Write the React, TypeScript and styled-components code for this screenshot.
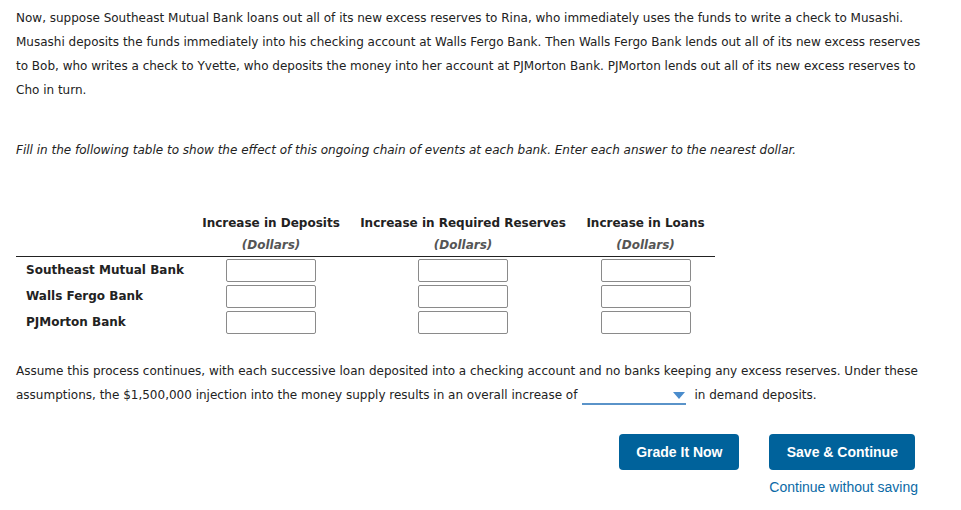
import React from "react";
import styled, { createGlobalStyle } from "styled-components";

const Global = createGlobalStyle`
  html, body { margin: 0; padding: 0; background: #fff; }
  body { font-family: "DejaVu Sans", Verdana, sans-serif; color: #222; }
`;

const FONT = `"DejaVu Sans", Verdana, sans-serif`;

const Page = styled.div`
  padding: 6px 16px 0 16px;
  width: 961px;
  box-sizing: border-box;
  font-family: ${FONT};
`;

const Para = styled.p<{ $mt?: number }>`
  margin: ${(p) => p.$mt ?? 0}px 0 0 0;
  font-family: ${FONT};
  font-size: 12px;
  line-height: 24px;
  width: 912px;
  color: #222;
`;

const Instr = styled(Para)`
  font-style: italic;
`;

const Table = styled.table`
  margin-top: 50px;
  border-collapse: collapse;
  table-layout: fixed;
  width: 699px;
  font-family: ${FONT};
  font-size: 12px;
  color: #222;
`;

const Th = styled.th<{ $w: number }>`
  width: ${(p) => p.$w}px;
  padding: 0;
  height: 22px;
  font-weight: bold;
  text-align: center;
  white-space: nowrap;
`;

const SubTh = styled.th`
  padding: 0;
  height: 22px;
  font-weight: bold;
  font-style: italic;
  color: #555;
  text-align: center;
  border-bottom: 1px solid #222;
`;

const RowLabel = styled.td`
  padding: 0 0 0 10px;
  height: 26px;
  font-weight: bold;
  white-space: nowrap;
`;

const Cell = styled.td`
  padding: 0;
  text-align: center;
  height: 26px;
`;

const Box = styled.input`
  box-sizing: border-box;
  width: 90px;
  height: 23px;
  border: 1px solid #8a8a8a;
  border-radius: 2px;
  margin: 0;
  padding: 0 4px;
  vertical-align: middle;
  font: inherit;
`;

const Select = styled.span`
  display: inline-block;
  position: relative;
  width: 104px;
  height: 14px;
  margin: 0 8px 0 5px;
  border-bottom: 2px solid #5a93c9;
  vertical-align: -6px;
`;

const Caret = styled.span`
  position: absolute;
  right: 1px;
  top: 3px;
  width: 0;
  height: 0;
  border-left: 6px solid transparent;
  border-right: 6px solid transparent;
  border-top: 7px solid #4a8ccc;
`;

const Actions = styled.div`
  display: flex;
  justify-content: flex-end;
  gap: 30px;
  margin-top: 27px;
  padding-right: 27px;
`;

const Col = styled.div`
  display: flex;
  flex-direction: column;
  align-items: flex-start;
`;

const Btn = styled.button<{ $w: number }>`
  width: ${(p) => p.$w}px;
  height: 36px;
  background: #00629b;
  color: #fff;
  border: none;
  border-radius: 4px;
  font-family: "Liberation Sans", Arial, sans-serif;
  font-weight: bold;
  font-size: 14px;
  cursor: pointer;
`;

const Link = styled.a`
  margin-top: 9px;
  font-family: "Liberation Sans", Arial, sans-serif;
  font-size: 14px;
  color: #0b6aa6;
  text-decoration: none;
  white-space: nowrap;
`;

const banks = ["Southeast Mutual Bank", "Walls Fergo Bank", "PJMorton Bank"];

export default function App() {
  return (
    <Page>
      <Global />
      <Para>
        Now, suppose Southeast Mutual Bank loans out all of its new excess reserves to Rina, who immediately uses the
        funds to write a check to Musashi. Musashi deposits the funds immediately into his checking account at Walls
        Fergo Bank. Then Walls Fergo Bank lends out all of its new excess reserves to Bob, who writes a check to
        Yvette, who deposits the money into her account at PJMorton Bank. PJMorton lends out all of its new excess
        reserves to Cho in turn.
      </Para>
      <Instr $mt={36}>
        Fill in the following table to show the effect of this ongoing chain of events at each bank. Enter each answer
        to the nearest dollar.
      </Instr>
      <Table>
        <thead>
          <tr>
            <Th $w={176}></Th>
            <Th $w={158}>Increase in Deposits</Th>
            <Th $w={226}>Increase in Required Reserves</Th>
            <Th $w={139}>Increase in Loans</Th>
          </tr>
          <tr>
            <SubTh></SubTh>
            <SubTh>(Dollars)</SubTh>
            <SubTh>(Dollars)</SubTh>
            <SubTh>(Dollars)</SubTh>
          </tr>
        </thead>
        <tbody>
          {banks.map((b) => (
            <tr key={b}>
              <RowLabel>{b}</RowLabel>
              <Cell><Box /></Cell>
              <Cell><Box /></Cell>
              <Cell><Box /></Cell>
            </tr>
          ))}
        </tbody>
      </Table>
      <Para $mt={24}>
        Assume this process continues, with each successive loan deposited into a checking account and no banks
        keeping any excess reserves. Under these assumptions, the $1,500,000 injection into the money supply results
        in an overall increase of
        <Select>
          <Caret />
        </Select>
        in demand deposits.
      </Para>
      <Actions>
        <Btn $w={120}>Grade It Now</Btn>
        <Col>
          <Btn $w={146}>Save &amp; Continue</Btn>
          <Link href="#">Continue without saving</Link>
        </Col>
      </Actions>
    </Page>
  );
}
